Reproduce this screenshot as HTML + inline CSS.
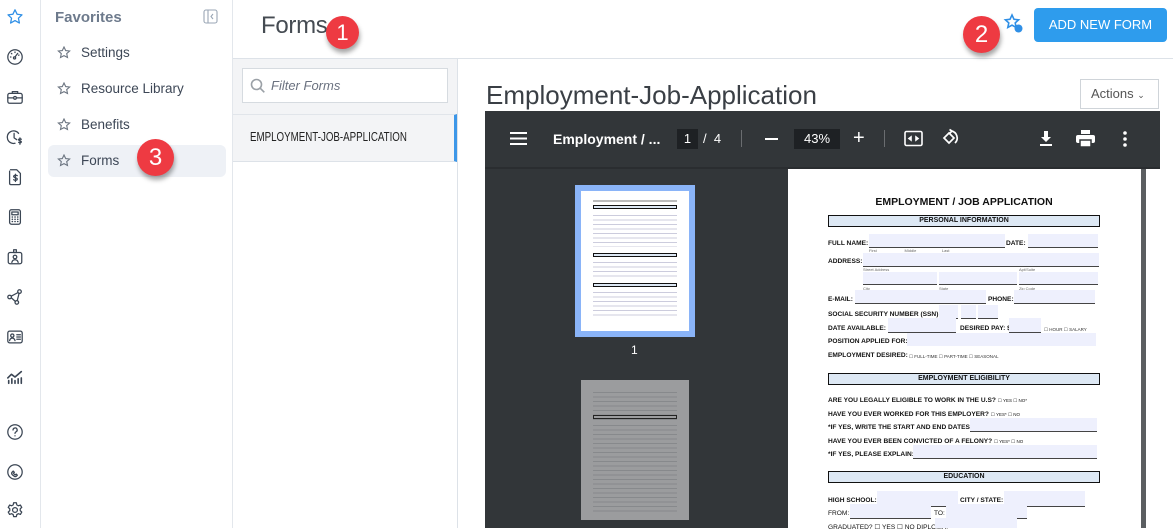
<!DOCTYPE html>
<html><head><meta charset="utf-8">
<style>
*{box-sizing:border-box;margin:0;padding:0}
body{width:1173px;height:528px;overflow:hidden;background:#fff;font-family:"Liberation Sans",sans-serif;position:relative}
.a{position:absolute}
.rail{left:0;top:0;width:41px;height:528px;border-right:1px solid #e3e7ec;background:#fff}
.rail svg{position:absolute;left:6px;width:18px;height:18px;fill:none;stroke:#3b4654;stroke-width:1.4;stroke-linecap:round;stroke-linejoin:round}
.side{left:41px;top:0;width:192px;height:528px;border-right:1px solid #e3e7ec}
.item{position:absolute;left:7px;width:178px;height:32px;border-radius:6px;font-size:13.5px;color:#3d4756}
.item svg{position:absolute;left:9px;top:9px;width:14px;height:14px;fill:none;stroke:#6b7480;stroke-width:1.1}
.item span{position:absolute;left:33px;top:8px}
.badge{position:absolute;border-radius:50%;background:#ee3a42;color:#fff;font-size:24px;text-align:center;box-shadow:1px 4px 5px rgba(0,0,0,.35)}
.pl{position:absolute;font-size:6.6px;font-weight:bold;color:#111;white-space:nowrap;font-family:"Liberation Sans",sans-serif}
.fld{position:absolute;background:#eef0fd;border-bottom:1px solid #444}
.sec{position:absolute;left:828px;width:272px;height:12px;background:#dde8f4;border:1.5px solid #111;font-size:7px;font-weight:bold;text-align:center;line-height:9px;color:#111}
.sub{position:absolute;font-size:4px;color:#666}
</style></head><body>

<div class="a rail">
<svg style="top:8px;stroke:#2f8fe6" viewBox="0 0 20 20"><path d="M10 2l2.4 5 5.4.6-4 3.7 1.1 5.4L10 14l-4.9 2.7 1.1-5.4-4-3.7 5.4-.6z"/></svg>
<svg style="top:48px" viewBox="0 0 20 20"><circle cx="10" cy="10" r="8"/><path d="M10 10l3-4M6 6l.5.5M10 4.5v.5M14 8l.4-.2M5 10h.5"/><circle cx="9.5" cy="11" r="1.2"/></svg>
<svg style="top:88px" viewBox="0 0 20 20"><rect x="2" y="6" width="16" height="11" rx="2"/><path d="M7 6V4h6v2M2 11h6M12 11h6"/><circle cx="10" cy="11" r="1.5"/></svg>
<svg style="top:128px" viewBox="0 0 20 20"><path d="M14 6A7 7 0 1 0 10 17"/><path d="M9 6v5l3 2"/><path d="M17 12.5c-1-.8-3-.6-3 .6s3 .8 3 2.2-2 1.4-3 .6M15.5 11v7"/></svg>
<svg style="top:168px" viewBox="0 0 20 20"><path d="M5 2h7l4 4v11a1.5 1.5 0 0 1-1.5 1.5h-9A1.5 1.5 0 0 1 4 17V3.5"/><path d="M12.5 8.5c-1-.8-4-.7-4 1s4 .8 4 2.7-3 1.7-4 .8M10.5 7v8"/></svg>
<svg style="top:208px" viewBox="0 0 20 20"><rect x="4" y="2" width="12" height="16" rx="2"/><rect x="6.5" y="4.5" width="7" height="3"/><path d="M7 10h.1M10 10h.1M13 10h.1M7 12.5h.1M10 12.5h.1M13 12.5h.1M7 15h.1M10 15h.1M13 15h.1" stroke-width="1.8"/></svg>
<svg style="top:248px" viewBox="0 0 20 20"><rect x="2.5" y="5" width="15" height="12.5" rx="2"/><rect x="8.5" y="2" width="3" height="3"/><circle cx="10" cy="10" r="2"/><path d="M6.5 16c.5-2 2-3 3.5-3s3 1 3.5 3"/></svg>
<svg style="top:288px" viewBox="0 0 20 20"><circle cx="4" cy="10" r="2"/><circle cx="15" cy="4" r="2"/><circle cx="12" cy="16" r="2"/><path d="M6 9l7.5-4M6 11l4.5 4M14.5 6l-2 8"/></svg>
<svg style="top:328px" viewBox="0 0 20 20"><rect x="2" y="3.5" width="16" height="13" rx="2"/><circle cx="7" cy="8.5" r="1.8"/><path d="M4 14c.5-2 1.8-2.8 3-2.8s2.5.8 3 2.8M12 7.5h4M12 10h4M12 12.5h4"/></svg>
<svg style="top:368px" viewBox="0 0 20 20"><path d="M2 11l4-4 4 3 7-6M3 17v-3M6.5 17v-5M10 17v-3M13.5 17v-5M17 17v-6" stroke-width="1.8"/></svg>
<svg style="top:423px" viewBox="0 0 20 20"><circle cx="10" cy="10" r="8"/><path d="M7.8 7.8a2.3 2.3 0 1 1 3.2 2.1c-.7.4-1 .8-1 1.6M10 14.2v.1"/></svg>
<svg style="top:463px" viewBox="0 0 20 20"><circle cx="10" cy="10" r="8"/><path d="M7 13c-1-1-1-2 0-3l1-1 1.3 1.3-1 1c.5 1 1 1.4 2 2l1-1 1.3 1.3-1 1c-1 1-2 .6-3-.3z"/></svg>
<svg style="top:501px" viewBox="0 0 20 20"><circle cx="10" cy="10" r="2.7"/><path d="M8.5 2h3l.5 2.3 1.8 1 2.2-.8 1.5 2.6-1.7 1.6v2l1.7 1.6-1.5 2.6-2.2-.8-1.8 1-.5 2.3h-3l-.5-2.3-1.8-1-2.2.8-1.5-2.6 1.7-1.6v-2L2.5 7.1 4 4.5l2.2.8 1.8-1z"/></svg>
</div>

<div class="a side">
<div class="a" style="left:14px;top:9px;font-size:15px;font-weight:bold;color:#6d7a8c">Favorites</div>
<svg class="a" style="left:162px;top:9px" width="15" height="15" viewBox="0 0 15 15" fill="none" stroke="#9aa6b5" stroke-width="1.1"><rect x="1" y="1" width="13" height="13" rx="2"/><path d="M5 1v13M10 5l-2 2.5 2 2.5"/></svg>
<div class="item" style="top:37px"><svg viewBox="0 0 14 14"><path d="M7 1l1.7 3.6 3.9.4-2.9 2.6.8 3.9L7 9.6l-3.5 1.9.8-3.9L1.4 5l3.9-.4z"/></svg><span>Settings</span></div>
<div class="item" style="top:73px"><svg viewBox="0 0 14 14"><path d="M7 1l1.7 3.6 3.9.4-2.9 2.6.8 3.9L7 9.6l-3.5 1.9.8-3.9L1.4 5l3.9-.4z"/></svg><span>Resource Library</span></div>
<div class="item" style="top:109px"><svg viewBox="0 0 14 14"><path d="M7 1l1.7 3.6 3.9.4-2.9 2.6.8 3.9L7 9.6l-3.5 1.9.8-3.9L1.4 5l3.9-.4z"/></svg><span>Benefits</span></div>
<div class="item" style="top:145px;background:#eef1f6"><svg viewBox="0 0 14 14"><path d="M7 1l1.7 3.6 3.9.4-2.9 2.6.8 3.9L7 9.6l-3.5 1.9.8-3.9L1.4 5l3.9-.4z"/></svg><span>Forms</span></div>
</div>
<div class="badge" style="left:137px;top:139px;width:37px;height:37px;line-height:37px">3</div>

<!-- header -->
<div class="a" style="left:233px;top:58px;width:940px;height:1px;background:#dde2e8"></div>
<div class="a" style="left:261px;top:12px;font-size:24px;color:#454b52;letter-spacing:-0.3px">Forms</div>
<div class="badge" style="left:326px;top:16px;width:33px;height:33px;line-height:33px;font-size:22px">1</div>
<div class="badge" style="left:963px;top:16px;width:37px;height:37px;line-height:37px">2</div>
<svg class="a" style="left:1003px;top:13px" width="22" height="22" viewBox="0 0 22 22" fill="none" stroke="#2f8fe6" stroke-width="1.6"><path d="M9 2l2 4.3 4.6.5-3.4 3.1 1 4.6L9 12.2l-4.2 2.3 1-4.6L2.4 6.8 7 6.3z"/><circle cx="15.5" cy="15.5" r="4" fill="#2f8fe6" stroke="none"/></svg>
<div class="a" style="left:1034px;top:8px;width:133px;height:34px;background:#2e9ced;border-radius:4px;color:#fff;font-size:13px;text-align:center;line-height:34px">ADD NEW FORM</div>

<!-- list -->
<div class="a" style="left:233px;top:59px;width:225px;height:469px;border-right:1px solid #dde2e8"></div>
<div class="a" style="left:233px;top:59px;width:224px;height:55px;background:#f3f4f6"></div>
<div class="a" style="left:242px;top:68px;width:206px;height:35px;border:1px solid #d6dbe0;background:#fff"></div>
<svg class="a" style="left:250px;top:78px" width="16" height="16" viewBox="0 0 16 16" fill="none" stroke="#9aa0a6" stroke-width="1.6"><circle cx="6.5" cy="6.5" r="5"/><path d="M10.3 10.3l4 4"/></svg>
<div class="a" style="left:271px;top:78px;font-size:13px;font-style:italic;color:#6b7280">Filter Forms</div>
<div class="a" style="left:233px;top:114px;width:224px;height:48px;background:#f3f4f6;border-top:1px solid #e1e5ea;border-bottom:1px solid #dde2e8;border-right:3px solid #3d97e8"></div>
<div class="a" style="left:250px;top:130px;font-size:12.5px;color:#222;white-space:nowrap;transform:scaleX(0.78);transform-origin:0 0">EMPLOYMENT-JOB-APPLICATION</div>

<!-- doc header -->
<div class="a" style="left:486px;top:80px;font-size:26px;color:#3a3f45">Employment-Job-Application</div>
<div class="a" style="left:1080px;top:79px;width:79px;height:30px;border:1px solid #cfd4d9;font-size:13px;color:#555;line-height:28px;padding-left:10px">Actions <span style="font-size:9px">&#8964;</span></div>

<!-- viewer -->
<div class="a" style="left:485px;top:111px;width:675px;height:417px;background:#323639"></div>
<div class="a" style="left:485px;top:167px;width:675px;height:2px;background:#2a2d30"></div>
<div class="a" style="left:1140px;top:169px;width:20px;height:359px;background:#fff"></div>
<div class="a" style="left:1141px;top:169px;width:5px;height:359px;background:#5b5e61"></div>
<!-- toolbar -->
<svg class="a" style="left:510px;top:131px" width="17" height="15" viewBox="0 0 17 15" stroke="#fff" stroke-width="2"><path d="M0 2h17M0 7.5h17M0 13h17"/></svg>
<div class="a" style="left:553px;top:131px;font-size:14px;font-weight:bold;color:#fff">Employment / ...</div>
<div class="a" style="left:677px;top:129px;width:21px;height:20px;background:#1e2124;color:#fff;font-size:13px;text-align:center;line-height:20px">1</div>
<div class="a" style="left:703px;top:131px;font-size:13px;color:#fff">/&nbsp;&nbsp;4</div>
<div class="a" style="left:741px;top:130px;width:1px;height:17px;background:#6a6d70"></div>
<div class="a" style="left:765px;top:138px;width:13px;height:2px;background:#fff"></div>
<div class="a" style="left:794px;top:129px;width:46px;height:20px;background:#1e2124;color:#fff;font-size:13px;text-align:center;line-height:20px">43%</div>
<div class="a" style="left:853px;top:127px;font-size:20px;color:#fff">+</div>
<div class="a" style="left:884px;top:130px;width:1px;height:17px;background:#6a6d70"></div>
<svg class="a" style="left:904px;top:130px" width="19" height="17" viewBox="0 0 19 17" fill="none" stroke="#fff" stroke-width="1.6"><rect x="1" y="1.5" width="17" height="14" rx="1.5"/><path d="M5 8.5l2-1.5v3zM14 8.5l-2-1.5v3z" fill="#fff"/></svg>
<svg class="a" style="left:940px;top:128px" width="20" height="20" viewBox="0 0 20 20" fill="none" stroke="#fff" stroke-width="1.7"><path d="M9 5l-5 5 5 5 5-5z"/><path d="M11 3a7 7 0 0 1 4 12"/><path d="M9.5 1.5L12 3l-2 2" /></svg>
<svg class="a" style="left:1038px;top:130px" width="16" height="17" viewBox="0 0 16 17" fill="#fff"><path d="M6 1h4v6h3l-5 5-5-5h3z"/><rect x="2" y="14" width="12" height="2"/></svg>
<svg class="a" style="left:1076px;top:130px" width="19" height="17" viewBox="0 0 19 17" fill="#fff"><rect x="5" y="0" width="9" height="4"/><rect x="0" y="5" width="19" height="8" rx="2"/><rect x="4" y="10" width="11" height="7" stroke="#323639" stroke-width="1.5"/></svg>
<svg class="a" style="left:1122px;top:130px" width="6" height="18" viewBox="0 0 6 18" fill="#fff"><circle cx="3" cy="3" r="1.8"/><circle cx="3" cy="9" r="1.8"/><circle cx="3" cy="15" r="1.8"/></svg>

<!-- thumbnails -->
<div class="a" style="left:575px;top:185px;width:120px;height:152px;background:#8ab4f8"></div>
<div class="a" style="left:581px;top:191px;width:108px;height:140px;background:#fff"></div>
<div class="a" style="left:593px;top:200px;width:84px;height:2px;background:#bbb"></div>
<div class="a" style="left:593px;top:205px;width:84px;height:4px;border:1px solid #111;background:#dde8f4"></div>
<div class="a" style="left:593px;top:213px;width:84px;height:34px;background:repeating-linear-gradient(#fff 0 2px,#ccd 2px 3px,#fff 3px 4.5px)"></div>
<div class="a" style="left:593px;top:253px;width:84px;height:4px;border:1px solid #111;background:#dde8f4"></div>
<div class="a" style="left:593px;top:260px;width:84px;height:19px;background:repeating-linear-gradient(#fff 0 2px,#ccd 2px 3px,#fff 3px 4.5px)"></div>
<div class="a" style="left:593px;top:283px;width:84px;height:4px;border:1px solid #111;background:#dde8f4"></div>
<div class="a" style="left:593px;top:290px;width:84px;height:26px;background:repeating-linear-gradient(#fff 0 2px,#ccd 2px 3px,#fff 3px 4.5px)"></div>
<div class="a" style="left:631px;top:343px;font-size:12px;color:#fff">1</div>
<div class="a" style="left:581px;top:380px;width:108px;height:140px;background:#9b9c9e"></div>
<div class="a" style="left:593px;top:390px;width:84px;height:30px;background:repeating-linear-gradient(#9b9c9e 0 2px,#87898c 2px 3px,#9b9c9e 3px 4.5px)"></div>
<div class="a" style="left:593px;top:415px;width:84px;height:4px;border:1px solid #222"></div>
<div class="a" style="left:593px;top:423px;width:84px;height:90px;background:repeating-linear-gradient(#9b9c9e 0 2px,#87898c 2px 3px,#9b9c9e 3px 4.5px)"></div>

<!-- page -->
<div class="a" style="left:788px;top:169px;width:352px;height:359px;background:#fff"></div>
<div class="pl" style="left:828px;top:196px;width:272px;text-align:center;font-size:10.5px">EMPLOYMENT / JOB APPLICATION</div>
<div class="sec" style="top:215px">PERSONAL INFORMATION</div>
<div class="fld" style="left:869px;top:234px;width:136px;height:14px"></div><div class="pl" style="left:828px;top:240px">FULL NAME:</div>
<div class="sub" style="left:869px;top:248px">First&nbsp;&nbsp;&nbsp;&nbsp;&nbsp;&nbsp;&nbsp;&nbsp;&nbsp;&nbsp;&nbsp;&nbsp;&nbsp;&nbsp;&nbsp;&nbsp;&nbsp;&nbsp;&nbsp;&nbsp;&nbsp;&nbsp;&nbsp;&nbsp;&nbsp;Middle&nbsp;&nbsp;&nbsp;&nbsp;&nbsp;&nbsp;&nbsp;&nbsp;&nbsp;&nbsp;&nbsp;&nbsp;&nbsp;&nbsp;&nbsp;&nbsp;&nbsp;&nbsp;&nbsp;&nbsp;&nbsp;&nbsp;&nbsp;Last</div>
<div class="pl" style="left:1006px;top:240px">DATE:</div><div class="fld" style="left:1028px;top:234px;width:70px;height:14px"></div>
<div class="pl" style="left:828px;top:258px">ADDRESS:</div><div class="fld" style="left:863px;top:253px;width:236px;height:14px"></div>
<div class="sub" style="left:863px;top:267px">Street Address</div><div class="sub" style="left:1019px;top:267px">Apt/Suite</div>
<div class="fld" style="left:863px;top:272px;width:74px;height:13px"></div><div class="fld" style="left:939px;top:272px;width:78px;height:13px"></div><div class="fld" style="left:1019px;top:272px;width:79px;height:13px"></div>
<div class="sub" style="left:863px;top:286px">City</div><div class="sub" style="left:939px;top:286px">State</div><div class="sub" style="left:1019px;top:286px">Zip Code</div>
<div class="pl" style="left:828px;top:296px">E-MAIL:</div><div class="fld" style="left:855px;top:290px;width:131px;height:14px"></div>
<div class="pl" style="left:988px;top:296px">PHONE:</div><div class="fld" style="left:1014px;top:290px;width:81px;height:14px"></div>
<div class="pl" style="left:828px;top:311px">SOCIAL SECURITY NUMBER (SSN):</div><div class="fld" style="left:939px;top:305px;width:19px;height:14px"></div><div class="fld" style="left:961px;top:305px;width:15px;height:14px"></div><div class="fld" style="left:978px;top:305px;width:20px;height:14px"></div>
<div class="pl" style="left:828px;top:325px">DATE AVAILABLE:</div><div class="fld" style="left:888px;top:318px;width:68px;height:15px"></div>
<div class="pl" style="left:960px;top:325px">DESIRED PAY: $</div><div class="fld" style="left:1009px;top:318px;width:32px;height:15px"></div>
<div class="sub" style="left:1044px;top:327px;font-size:4.5px;color:#333">☐ HOUR ☐ SALARY</div>
<div class="pl" style="left:828px;top:338px">POSITION APPLIED FOR:</div><div class="fld" style="left:907px;top:333px;width:189px;height:13px;border:none"></div>
<div class="pl" style="left:828px;top:352px">EMPLOYMENT DESIRED:</div><div class="sub" style="left:909px;top:354px;font-size:4.5px;color:#333">☐ FULL-TIME ☐ PART-TIME ☐ SEASONAL</div>
<div class="sec" style="top:373px">EMPLOYMENT ELIGIBILITY</div>
<div class="pl" style="left:828px;top:397px">ARE YOU LEGALLY ELIGIBLE TO WORK IN THE U.S? <span style="font-weight:normal;font-size:4.5px">☐ YES ☐ NO*</span></div>
<div class="pl" style="left:828px;top:411px">HAVE YOU EVER WORKED FOR THIS EMPLOYER? <span style="font-weight:normal;font-size:4.5px">☐ YES* ☐ NO</span></div>
<div class="pl" style="left:828px;top:424px">*IF YES, WRITE THE START AND END DATES:</div><div class="fld" style="left:970px;top:418px;width:127px;height:14px"></div>
<div class="pl" style="left:828px;top:438px">HAVE YOU EVER BEEN CONVICTED OF A FELONY? <span style="font-weight:normal;font-size:4.5px">☐ YES* ☐ NO</span></div>
<div class="pl" style="left:828px;top:451px">*IF YES, PLEASE EXPLAIN:</div><div class="fld" style="left:913px;top:445px;width:184px;height:14px"></div>
<div class="sec" style="top:471px">EDUCATION</div>
<div class="pl" style="left:828px;top:497px">HIGH SCHOOL:</div><div class="fld" style="left:877px;top:491px;width:81px;height:16px"></div>
<div class="pl" style="left:960px;top:497px">CITY / STATE:</div><div class="fld" style="left:1004px;top:491px;width:81px;height:16px"></div>
<div class="pl" style="left:828px;top:510px;font-weight:normal">FROM:</div><div class="fld" style="left:850px;top:504px;width:81px;height:15px"></div>
<div class="pl" style="left:934px;top:510px;font-weight:normal">TO:</div><div class="fld" style="left:946px;top:504px;width:81px;height:15px"></div>
<div class="pl" style="left:828px;top:523px;font-weight:normal">GRADUATED? ☐ YES ☐ NO DIPLOMA:</div><div class="fld" style="left:935px;top:518px;width:82px;height:10px;border:none"></div>
</body></html>
